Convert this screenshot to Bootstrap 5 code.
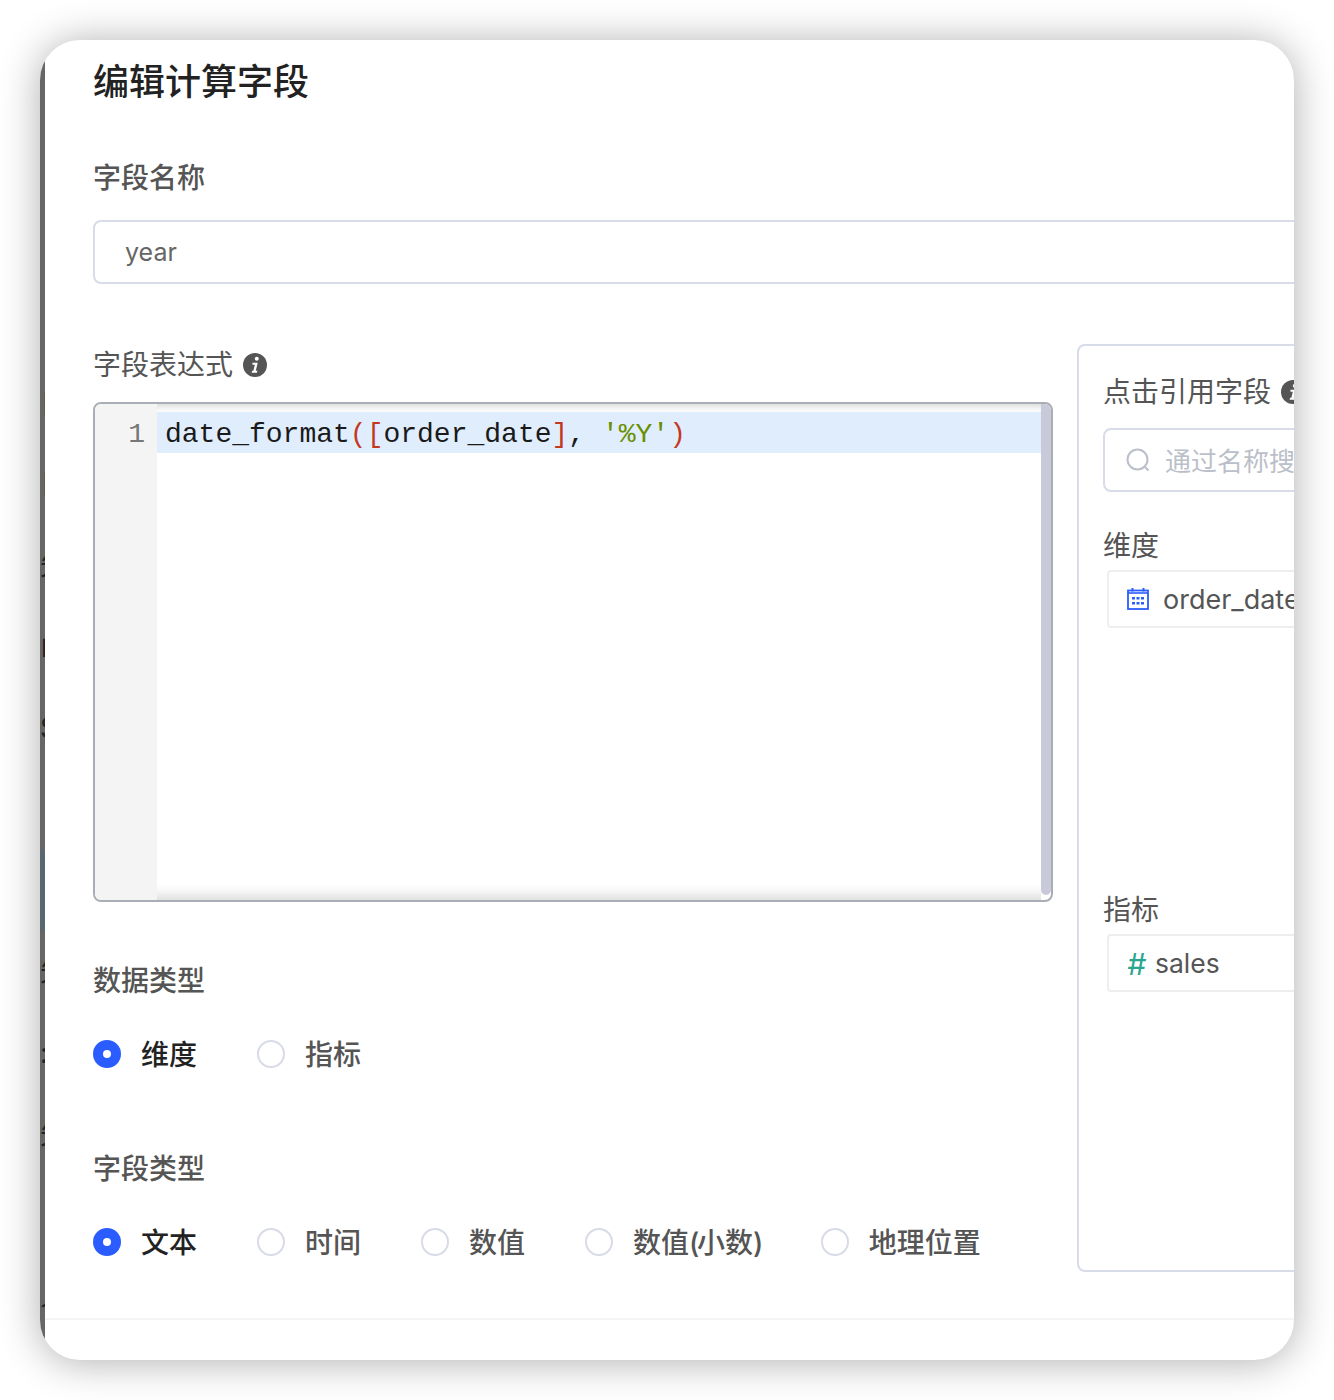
<!doctype html>
<html lang="zh-CN">
<head>
<meta charset="utf-8">
<title>编辑计算字段</title>
<link rel="stylesheet" href="https://cdn.jsdelivr.net/npm/bootstrap@5.3.0/dist/css/bootstrap.min.css">
<style>
html,body{background:#fff;height:1400px;overflow:hidden}
body{padding:40px;font-family:Inter,"Noto Sans CJK SC",sans-serif;color:#555}
.shell{width:1254px;height:1320px;border-radius:40px;overflow:hidden;background:#fff;box-shadow:0 2px 40px rgba(0,0,0,.32)}
.peek{width:5px;background:#666;flex:none;overflow:hidden;padding-top:323px;color:#222;font-size:28px}
.peek-row{height:81.2px;line-height:81.2px;white-space:nowrap;width:30px}
.peek-sel{background:#5b6770}
.main{flex:1;min-width:0;padding-left:48px}
.sheet-title{font-size:36px;line-height:40px;font-weight:500;color:#222;margin:21px 0 -1px;padding-top:1px}
.lbl{font-size:28px;line-height:40px;color:#555;margin:0 0 -1px;padding-top:1px}
.lbl-b{font-weight:500}
.mt-name{margin-top:56px}
.fld{width:1300px;height:64px;margin-top:23px;border:2px solid #d8dbe8;border-radius:8px;padding:0 30px;font-size:25px;color:#666;box-shadow:none}
.split{margin-top:60px;gap:24px}
.leftcol{width:960px;flex:none}
.hint{gap:10px}
.editor{height:500px;margin-top:18px;border:2px solid #a9adb5;border-radius:8px;overflow:hidden;font-family:"Liberation Mono",monospace;font-size:28px;line-height:45px}
.gutter{width:62px;flex:none;background:#f4f4f4;padding:8px 12px 0 0;text-align:right;color:#777}
.codepane{flex:1;padding-top:8px;box-shadow:inset 0 10px 8px -8px rgba(0,0,0,.18),inset 0 -18px 14px -14px rgba(0,0,0,.16)}
.codeline{background:#e0edfd;padding-left:8px;color:#1a1a1a;white-space:pre;height:41px}
.c-br{color:#c4391d}
.c-str{color:#6a8f00}
.vbar{width:10px;flex:none;background:#c8cad9;margin-bottom:5px;border-radius:0 0 5px 5px}
.mt-type{margin-top:58px}
.mt-type2{margin-top:80px}
.radios{margin-top:40px;gap:60px}
.ritem{gap:20px;height:28px;font-size:28px;line-height:28px;margin:0;padding:0;min-height:0}
.ritem .form-check-input{width:28px;height:28px;margin:0;float:none;border:2px solid #d8dbe8;box-shadow:none;flex:none}
.ritem .form-check-input:checked{background:#fff;background-image:none;border:10px solid #2b5cff}
.ritem label{color:#555;font-weight:500;padding-top:2px}
.ritem label.on{color:#222}
.paren{letter-spacing:-2.500px}
.panel{width:1500px;height:928px;flex:none;border:2px solid #d8dbe8;border-radius:8px;padding:25px 0 0 24px}
.ptitle{gap:10px;white-space:nowrap}
.searchbox{width:420px;height:64px;margin-top:17px;border:2px solid #d8dbe8;border-radius:8px;padding-left:20px;gap:14px}
.searchbox input{border:0;outline:0;padding:2px 0 0;font-size:26px;color:#555;background:none;width:300px}
.searchbox input::placeholder{color:#bbbfc9;opacity:1}
.mt-dim{margin-top:33px}
.mt-met{margin-top:261px}
.fielditem{width:420px;height:58px;margin:5px 0 0 4px;border:2px solid #eee;border-radius:4px;padding-left:17px;font-size:27px;color:#555;white-space:nowrap}
.ftext{padding-top:2px}
.ftext-d{margin-left:5px}
.ftext-s{font-size:26.500px;margin-left:2px}
.hash{color:#2aa58f;font-size:30px;margin:2px 7px 0 1px;font-style:italic}
.foot{height:42px;border-top:2px solid #f5f5f7;flex:none}
.info{flex:none;display:block}
</style>
</head>
<body>
<div class="shell d-flex">
  <div class="peek" aria-hidden="true">
    <div class="peek-row">日</div>
    <div class="peek-row">日</div>
    <div class="peek-row">矢</div>
    <div class="peek-row">山</div>
    <div class="peek-row">S</div>
    <div class="peek-row"></div>
    <div class="peek-row peek-sel"></div>
    <div class="peek-row">矢</div>
    <div class="peek-row">:</div>
    <div class="peek-row">矢</div>
    <div class="peek-row"></div>
    <div class="peek-row">人</div>
  </div>
  <div class="d-flex flex-column flex-grow-1" style="min-width:0">
    <div class="main flex-grow-1">
      <h1 class="sheet-title">编辑计算字段</h1>
      <p class="lbl lbl-b mt-name">字段名称</p>
      <input class="form-control fld" type="text" value="year">
      <div class="d-flex split">
        <div class="leftcol">
          <div class="lbl d-flex align-items-center hint">字段表达式
            <svg class="info" width="24" height="24" viewBox="0 0 24 24"><circle cx="12" cy="12" r="12" fill="#555"/><path d="M13.800 3.800a2 2 0 1 1 0 4 2 2 0 0 1 0-4zM9.400 9.800h5.300l-1.900 8h1.600l-.5 2H8.600l.5-2h1.300l1.400-6H9.500z" fill="#fff"/></svg>
          </div>
          <div class="editor d-flex">
            <div class="gutter">1</div>
            <div class="codepane flex-grow-1" style="min-width:0"><div class="codeline">date_format<span class="c-br">([</span>order_date<span class="c-br">]</span>, <span class="c-str">'%Y'</span><span class="c-br">)</span></div></div>
            <div class="vbar"></div>
          </div>
          <p class="lbl lbl-b mt-type">数据类型</p>
          <div class="d-flex radios">
            <div class="form-check d-flex align-items-center ritem"><input class="form-check-input" type="radio" name="a" id="a1" checked><label class="on" for="a1">维度</label></div>
            <div class="form-check d-flex align-items-center ritem"><input class="form-check-input" type="radio" name="a" id="a2"><label for="a2">指标</label></div>
          </div>
          <p class="lbl lbl-b mt-type2">字段类型</p>
          <div class="d-flex radios">
            <div class="form-check d-flex align-items-center ritem"><input class="form-check-input" type="radio" name="b" id="b1" checked><label class="on" for="b1">文本</label></div>
            <div class="form-check d-flex align-items-center ritem"><input class="form-check-input" type="radio" name="b" id="b2"><label for="b2">时间</label></div>
            <div class="form-check d-flex align-items-center ritem"><input class="form-check-input" type="radio" name="b" id="b3"><label for="b3">数值</label></div>
            <div class="form-check d-flex align-items-center ritem"><input class="form-check-input" type="radio" name="b" id="b4"><label for="b4">数值<span class="paren">(</span>小数<span class="paren">)</span></label></div>
            <div class="form-check d-flex align-items-center ritem"><input class="form-check-input" type="radio" name="b" id="b5"><label for="b5">地理位置</label></div>
          </div>
        </div>
        <div class="panel">
          <div class="lbl d-flex align-items-center ptitle">点击引用字段
            <svg class="info" width="24" height="24" viewBox="0 0 24 24"><circle cx="12" cy="12" r="12" fill="#555"/><path d="M13.800 3.800a2 2 0 1 1 0 4 2 2 0 0 1 0-4zM9.400 9.800h5.300l-1.900 8h1.600l-.5 2H8.600l.5-2h1.300l1.400-6H9.500z" fill="#fff"/></svg>
          </div>
          <div class="searchbox d-flex align-items-center">
            <svg width="26" height="26" viewBox="0 0 26 26" fill="none" stroke="#bbbfc9" stroke-width="2"><circle cx="12.500" cy="12.500" r="10"/><path d="M20 20l3.500 3.500"/></svg>
            <input type="text" placeholder="通过名称搜索">
          </div>
          <p class="lbl mt-dim">维度</p>
          <div class="fielditem d-flex align-items-center">
            <svg class="me-2" width="24" height="24" viewBox="0 0 24 24" fill="none"><rect x="2" y="3.500" width="20" height="18.500" stroke="#2b5cff" stroke-width="1.800"/><path d="M6.500 1v3.500M17.500 1v3.500" stroke="#2b5cff" stroke-width="2"/><path d="M2 6h20" stroke="#2b5cff" stroke-width="1.600"/><path d="M6 10h3v2.500H6zM10.500 10h3v2.500h-3zM15 10h3v2.500h-3zM6 15h3v2.500H6zM10.500 15h3v2.500h-3zM15 15h3v2.500h-3z" fill="#2b5cff"/></svg>
            <span class="ftext ftext-d">order_date</span>
          </div>
          <p class="lbl mt-met">指标</p>
          <div class="fielditem d-flex align-items-center"><span class="hash">#</span><span class="ftext ftext-s">sales</span></div>
        </div>
      </div>
    </div>
    <div class="foot"></div>
  </div>
</div>
<script src="https://cdn.jsdelivr.net/npm/bootstrap@5.3.0/dist/js/bootstrap.bundle.min.js"></script>
</body>
</html>
